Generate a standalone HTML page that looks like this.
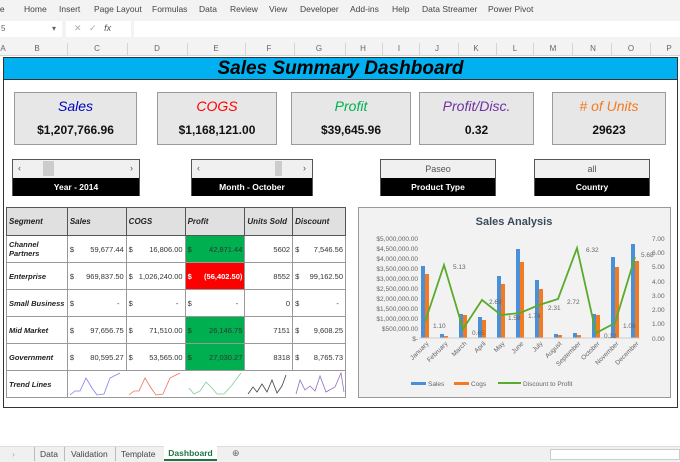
<!DOCTYPE html>
<html><head><meta charset="utf-8"><style>
*{margin:0;padding:0;box-sizing:border-box}
body{width:680px;height:462px;overflow:hidden;background:#fff;font-family:"Liberation Sans",sans-serif;position:relative}
.a{position:absolute}
.rib{left:0;top:0;width:680px;height:18px;background:#f3f3f3;font-size:8.5px;color:#444}
.rib span{position:absolute;top:4px}
.fb{left:0;top:18px;width:680px;height:23px;background:#f3f3f3}
.ch{left:0;top:41px;width:680px;height:15px;background:#f3f3f3;border-bottom:1px solid #d4d4d4;font-size:8px;color:#666}
.ch span{position:absolute;top:3px;transform:translateX(-50%)}
.ch i{position:absolute;top:2px;width:1px;height:12px;background:#d4d4d4}
.card{background:#e7e7e7;border:1px solid #9a9a9a;text-align:center;font-style:normal}
.card .t{font-size:14px;font-style:italic;margin-top:5px}
.card .v{font-size:12px;font-weight:bold;color:#111;margin-top:9px}
.sl{border:1px solid #555}
.sl .top{height:18px;background:#f0f0f0;position:relative;font-size:9px;color:#555}
.sl .bot{height:18px;background:#000;color:#fff;font-size:8.5px;font-weight:bold;text-align:center;line-height:18px}
table{border-collapse:collapse;font-size:7.5px}
td{border:1px solid #999;height:27px;padding:0 2px;color:#333}
th{border:1px solid #555;height:28px;background:#e0e0e0;font-style:italic;font-weight:bold;text-align:left;padding:0 2px;font-size:8px;color:#222}
td.s{font-style:italic;font-weight:bold;color:#222;font-size:7.5px}
.m{display:flex;justify-content:space-between}
</style></head><body>
<div class="a rib">
<span style="left:-2px">le</span><span style="left:24px">Home</span><span style="left:59px">Insert</span><span style="left:94px">Page Layout</span><span style="left:152px">Formulas</span><span style="left:199px">Data</span><span style="left:230px">Review</span><span style="left:269px">View</span><span style="left:300px">Developer</span><span style="left:350px">Add-ins</span><span style="left:392px">Help</span><span style="left:422px">Data Streamer</span><span style="left:488px">Power Pivot</span>
</div>
<div class="a fb">
<div class="a" style="left:0;top:3px;width:62px;height:16px;background:#fff;font-size:8px;color:#666;padding:3px 1px">5<span style="position:absolute;right:6px">▾</span></div>
<div class="a" style="left:66px;top:3px;width:65px;height:16px;background:#fff;font-size:9px;color:#aaa;padding:2px 8px">✕ &nbsp; ✓ &nbsp; <i style="color:#555">fx</i></div>
<div class="a" style="left:134px;top:3px;width:546px;height:16px;background:#fff"></div>
</div>
<div class="a ch">
<span style="left:3px">A</span><span style="left:37px">B</span><span style="left:97px">C</span><span style="left:157px">D</span><span style="left:216px">E</span><span style="left:269px">F</span><span style="left:319px">G</span><span style="left:363px">H</span><span style="left:399px">I</span><span style="left:437px">J</span><span style="left:476px">K</span><span style="left:515px">L</span><span style="left:553px">M</span><span style="left:593px">N</span><span style="left:631px">O</span><span style="left:669px">P</span>
<i style="left:67px"></i><i style="left:127px"></i><i style="left:187px"></i><i style="left:245px"></i><i style="left:294px"></i><i style="left:345px"></i><i style="left:382px"></i><i style="left:419px"></i><i style="left:458px"></i><i style="left:496px"></i><i style="left:533px"></i><i style="left:572px"></i><i style="left:611px"></i><i style="left:650px"></i>
</div>
<div class="a" style="left:3px;top:57px;width:675px;height:351px;border:1px solid #333;background:#fff"></div>
<div class="a" style="left:4px;top:58px;width:673px;height:22px;background:#00b0f0;border-bottom:1px solid #333;text-align:center;font-size:19px;font-weight:bold;font-style:italic;line-height:22px;color:#000">Sales Summary Dashboard</div>

<div class="a card" style="left:14px;top:92px;width:123px;height:53px"><div class="t" style="color:#0000c0">Sales</div><div class="v">$1,207,766.96</div></div>
<div class="a card" style="left:157px;top:92px;width:120px;height:53px"><div class="t" style="color:#ff0000">COGS</div><div class="v">$1,168,121.00</div></div>
<div class="a card" style="left:291px;top:92px;width:120px;height:53px"><div class="t" style="color:#00b050">Profit</div><div class="v">$39,645.96</div></div>
<div class="a card" style="left:419px;top:92px;width:115px;height:53px"><div class="t" style="color:#7030a0">Profit/Disc.</div><div class="v">0.32</div></div>
<div class="a card" style="left:552px;top:92px;width:114px;height:53px"><div class="t" style="color:#f47a20"># of Units</div><div class="v">29623</div></div>

<div class="a sl" style="left:12px;top:159px;width:128px;height:37px"><div class="top"><span class="a" style="left:5px;top:3px">‹</span><span class="a" style="left:30px;top:1px;width:11px;height:15px;background:#ccc"></span><span class="a" style="right:6px;top:3px">›</span></div><div class="bot">Year - 2014</div></div>
<div class="a sl" style="left:191px;top:159px;width:122px;height:37px"><div class="top"><span class="a" style="left:5px;top:3px">‹</span><span class="a" style="left:83px;top:1px;width:7px;height:15px;background:#ccc"></span><span class="a" style="right:6px;top:3px">›</span></div><div class="bot">Month - October</div></div>
<div class="a sl" style="left:380px;top:159px;width:116px;height:37px"><div class="top" style="text-align:center;line-height:18px;color:#555">Paseo</div><div class="bot">Product Type</div></div>
<div class="a sl" style="left:534px;top:159px;width:116px;height:37px"><div class="top" style="text-align:center;line-height:18px;color:#555">all</div><div class="bot">Country</div></div>

<table class="a" style="left:6px;top:207px;width:340px;border:1px solid #333">
<tr><th style="width:61px">Segment</th><th style="width:59px">Sales</th><th style="width:59px">COGS</th><th style="width:60px">Profit</th><th style="width:48px">Units Sold</th><th style="width:53px">Discount</th></tr>
<tr><td class="s">Channel<br>Partners</td><td><div class="m"><span>$</span><span>59,677.44</span></div></td><td><div class="m"><span>$</span><span>16,806.00</span></div></td><td style="background:#00b050"><div class="m"><span>$</span><span>42,871.44</span></div></td><td style="text-align:right">5602</td><td><div class="m"><span>$</span><span>7,546.56</span></div></td></tr>
<tr><td class="s">Enterprise</td><td><div class="m"><span>$</span><span>969,837.50</span></div></td><td><div class="m"><span>$</span><span>1,026,240.00</span></div></td><td style="background:#ff0000;color:#fff;font-weight:bold"><div class="m"><span>$</span><span>(56,402.50)</span></div></td><td style="text-align:right">8552</td><td><div class="m"><span>$</span><span>99,162.50</span></div></td></tr>
<tr><td class="s">Small Business</td><td><div class="m"><span>$</span><span>-&nbsp;&nbsp;</span></div></td><td><div class="m"><span>$</span><span>-&nbsp;&nbsp;</span></div></td><td><div class="m"><span>$</span><span>-&nbsp;&nbsp;</span></div></td><td style="text-align:right">0</td><td><div class="m"><span>$</span><span>-&nbsp;&nbsp;</span></div></td></tr>
<tr><td class="s">Mid Market</td><td><div class="m"><span>$</span><span>97,656.75</span></div></td><td><div class="m"><span>$</span><span>71,510.00</span></div></td><td style="background:#00b050"><div class="m"><span>$</span><span>26,146.75</span></div></td><td style="text-align:right">7151</td><td><div class="m"><span>$</span><span>9,608.25</span></div></td></tr>
<tr><td class="s">Government</td><td><div class="m"><span>$</span><span>80,595.27</span></div></td><td><div class="m"><span>$</span><span>53,565.00</span></div></td><td style="background:#00b050"><div class="m"><span>$</span><span>27,030.27</span></div></td><td style="text-align:right">8318</td><td><div class="m"><span>$</span><span>8,765.73</span></div></td></tr>
<tr><td class="s" style="border-top:1px solid #333">Trend Lines</td><td style="border-top:1px solid #333" colspan="5"></td></tr>
</table>
<svg class="a" style="left:0;top:370px" width="350" height="28">
<polyline fill="none" stroke="#8080f0" stroke-width=".8" points="70,25 75,21 80,21 86,8 92,18 97,25 104,24 110,8 120,3"/>
<polyline fill="none" stroke="#f07060" stroke-width=".8" points="129,25 134,21 139,21 145,8 151,18 156,25 163,24 170,8 180,3"/>
<polyline fill="none" stroke="#80d090" stroke-width=".8" points="189,18 194,24 200,21 206,12 212,18 217,24 224,24 232,15 241,3"/>
<polyline fill="none" stroke="#444" stroke-width=".8" points="248,24 253,17 257,22 262,14 267,22 272,10 277,23 282,16 286,5"/>
<polyline fill="none" stroke="#9070c0" stroke-width=".8" points="296,24 300,10 305,20 310,16 315,21 320,6 326,22 335,17 341,3 344,22"/>
</svg>

<svg class="a" style="left:358px;top:207px" width="313" height="191" font-family="Liberation Sans, sans-serif">
<rect x=".5" y=".5" width="312" height="190" fill="#f2f2f2" stroke="#999"/>
<text x="156" y="18" text-anchor="middle" font-size="11" font-weight="bold" fill="#3a4a5a">Sales Analysis</text>
<g font-size="6.5" fill="#666" text-anchor="end">
<text x="60" y="34">$5,000,000.00</text><text x="60" y="44">$4,500,000.00</text><text x="60" y="54">$4,000,000.00</text><text x="60" y="64">$3,500,000.00</text><text x="60" y="74">$3,000,000.00</text><text x="60" y="84">$2,500,000.00</text><text x="60" y="94">$2,000,000.00</text><text x="60" y="104">$1,500,000.00</text><text x="60" y="114">$1,000,000.00</text><text x="60" y="124">$500,000.00</text><text x="60" y="134">$-</text>
</g>
<g font-size="6.5" fill="#666">
<text x="294" y="34">7.00</text><text x="294" y="48">6.00</text><text x="294" y="62">5.00</text><text x="294" y="77">4.00</text><text x="294" y="91">3.00</text><text x="294" y="105">2.00</text><text x="294" y="119">1.00</text><text x="294" y="134">0.00</text>
</g>
<g fill="#4a90d9">
<rect x="63" y="59" width="4" height="72"/><rect x="82" y="127" width="4" height="4"/><rect x="101" y="107" width="4" height="24"/><rect x="120" y="110" width="4" height="21"/><rect x="139" y="69" width="4" height="62"/><rect x="158" y="42" width="4" height="89"/><rect x="177" y="73" width="4" height="58"/><rect x="196" y="127" width="4" height="4"/><rect x="215" y="126" width="4" height="5"/><rect x="234" y="107" width="4" height="24"/><rect x="253" y="50" width="4" height="81"/><rect x="273" y="37" width="4" height="94"/>
</g>
<g fill="#f47a20">
<rect x="67" y="67" width="4" height="64"/><rect x="86" y="129" width="4" height="2"/><rect x="105" y="108" width="4" height="23"/><rect x="124" y="113" width="4" height="18"/><rect x="143" y="77" width="4" height="54"/><rect x="162" y="55" width="4" height="76"/><rect x="181" y="82" width="4" height="49"/><rect x="200" y="128" width="4" height="3"/><rect x="219" y="128" width="4" height="3"/><rect x="238" y="108" width="4" height="23"/><rect x="257" y="60" width="4" height="71"/><rect x="277" y="54" width="4" height="77"/>
</g>
<line x1="61" y1="131" x2="282" y2="131" stroke="#ccc"/>
<polyline fill="none" stroke="#5aab2c" stroke-width="1.8" points="67,115 86,58 105,122 124,93 143,108 162,106 181,98 200,92 219,41 238,126 257,116 277,50"/>
<g font-size="6.5" fill="#666">
<text x="75" y="121">1.10</text><text x="95" y="62">5.13</text><text x="114" y="128">0.65</text><text x="131" y="97">2.69</text><text x="150" y="113">1.58</text><text x="170" y="111">1.74</text><text x="190" y="103">2.31</text><text x="209" y="97">2.72</text><text x="228" y="45">6.32</text><text x="246" y="131">0.32</text><text x="265" y="121">1.06</text><text x="283" y="50">5.68</text>
</g>
<g font-size="6.5" fill="#666" text-anchor="end">
<text transform="translate(71,137) rotate(-45)">January</text><text transform="translate(90,137) rotate(-45)">February</text><text transform="translate(109,137) rotate(-45)">March</text><text transform="translate(128,137) rotate(-45)">April</text><text transform="translate(147,137) rotate(-45)">May</text><text transform="translate(166,137) rotate(-45)">June</text><text transform="translate(185,137) rotate(-45)">July</text><text transform="translate(204,137) rotate(-45)">August</text><text transform="translate(223,137) rotate(-45)">September</text><text transform="translate(242,137) rotate(-45)">October</text><text transform="translate(261,137) rotate(-45)">November</text><text transform="translate(281,137) rotate(-45)">December</text>
</g>
<g font-size="6.5" fill="#666">
<rect x="53" y="175" width="15" height="3" fill="#4a90d9"/><text x="70" y="179">Sales</text>
<rect x="96" y="175" width="15" height="3" fill="#f47a20"/><text x="113" y="179">Cogs</text>
<rect x="140" y="175" width="23" height="2" fill="#5aab2c"/><text x="165" y="179">Discount to Profit</text>
</g>
</svg>

<div class="a" style="left:0;top:446px;width:680px;height:16px;background:#f0f0f0;border-top:1px solid #ddd;font-size:8.5px;color:#444">
<span class="a" style="left:12px;top:2px;color:#aaa">›</span>
<span class="a" style="left:34px;top:0;height:14px;border-left:1px solid #bbb"></span>
<span class="a" style="left:40px;top:2px">Data</span>
<span class="a" style="left:64px;top:0;height:14px;border-left:1px solid #bbb"></span>
<span class="a" style="left:71px;top:2px">Validation</span>
<span class="a" style="left:115px;top:0;height:14px;border-left:1px solid #bbb"></span>
<span class="a" style="left:121px;top:2px">Template</span>
<span class="a" style="left:164px;top:-1px;width:53px;height:15px;background:#fff;border-bottom:2px solid #217346;color:#217346;font-weight:bold;text-align:center;padding-top:2px">Dashboard</span>
<span class="a" style="left:232px;top:1px;color:#666;font-size:9px">⊕</span>
<span class="a" style="left:550px;top:2px;width:130px;height:11px;background:#fff;border:1px solid #ccc"></span>
</div>
</body></html>
